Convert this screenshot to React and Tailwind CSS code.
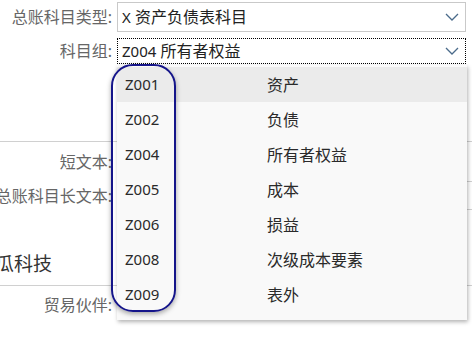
import React from "react";

const FONT = { fontFamily: '"Noto Sans", "Noto Sans CJK SC", sans-serif' };

const ITEMS = [
  ["Z001", "资产"],
  ["Z002", "负债"],
  ["Z004", "所有者权益"],
  ["Z005", "成本"],
  ["Z006", "损益"],
  ["Z008", "次级成本要素"],
  ["Z009", "表外"],
];

function Chevron() {
  return (
    <svg width="14" height="8" viewBox="0 0 14 8" className="shrink-0">
      <polyline points="1,1 7,7 13,1" fill="none" stroke="#4a6a8a" strokeWidth="1.3" />
    </svg>
  );
}

function Label({ children }) {
  return (
    <div className="flex w-[112px] shrink-0 justify-end whitespace-nowrap text-[16px] text-[#666]">
      <span className="shrink-0">{children}</span>
    </div>
  );
}

export default function App() {
  return (
    <div className="relative h-[341px] w-[472px] overflow-hidden bg-white text-[#222]" style={FONT}>
      {/* form rows */}
      <div className="flex flex-col">
        <div className="mt-[2px] flex h-[30px] items-center">
          <Label>总账科目类型:</Label>
          <div className="ml-[5px] mr-[6px] flex h-full flex-1 items-center justify-between border border-[#c9c9c9] bg-white pl-[4px] pr-[6px] text-[16px]">
            <span><span className="text-[15px]">X</span> 资产负债表科目</span>
            <Chevron />
          </div>
        </div>
        <div className="mt-[6px] flex h-[26px] items-center">
          <Label>科目组:</Label>
          <div className="ml-[5px] mr-[6px] flex h-full flex-1 items-center justify-between border border-dotted border-black bg-white pl-[4px] pr-[6px] text-[16px]">
            <span><span className="text-[15px]">Z004</span> 所有者权益</span>
            <Chevron />
          </div>
        </div>
        <div className="h-[78px] border-b border-[#d0d0d0]" />
        <div className="flex h-[39px] items-center">
          <Label>短文本:</Label>
        </div>
        <div className="flex h-[29px] items-center">
          <Label>总账科目长文本:</Label>
          <div className="ml-[5px] h-full flex-1 border-y border-[#d0d0d0]" />
        </div>
        <div className="flex h-[76px] items-end border-b border-[#d0d0d0] pb-[8px]">
          <span className="ml-[-24px] whitespace-nowrap text-[19px] leading-[26px] text-[#333]">西瓜科技</span>
        </div>
        <div className="flex h-[38px] items-center">
          <Label>贸易伙伴:</Label>
        </div>
      </div>

      {/* dropdown list */}
      <div className="absolute left-[117px] top-[65px] w-[350px] bg-[#f9f9f9] pb-[8px] pt-[2px] shadow-[1px_2px_4px_rgba(0,0,0,0.3)]">
        {ITEMS.map(([code, name], i) => (
          <div
            key={code}
            className={`flex h-[35px] items-center pl-[8px] text-[#2a2a2a] ${i === 0 ? "bg-[#ebebeb]" : ""}`}
          >
            <span className="w-[142px] text-[15px]">{code}</span>
            <span className="text-[16px]">{name}</span>
          </div>
        ))}
      </div>

      {/* annotation outline */}
      <div className="pointer-events-none absolute left-[111px] top-[64px] h-[248px] w-[65px] rounded-[22px] border-2 border-[#15158a] shadow-[0_2px_5px_rgba(0,0,0,0.35)]" />
    </div>
  );
}
